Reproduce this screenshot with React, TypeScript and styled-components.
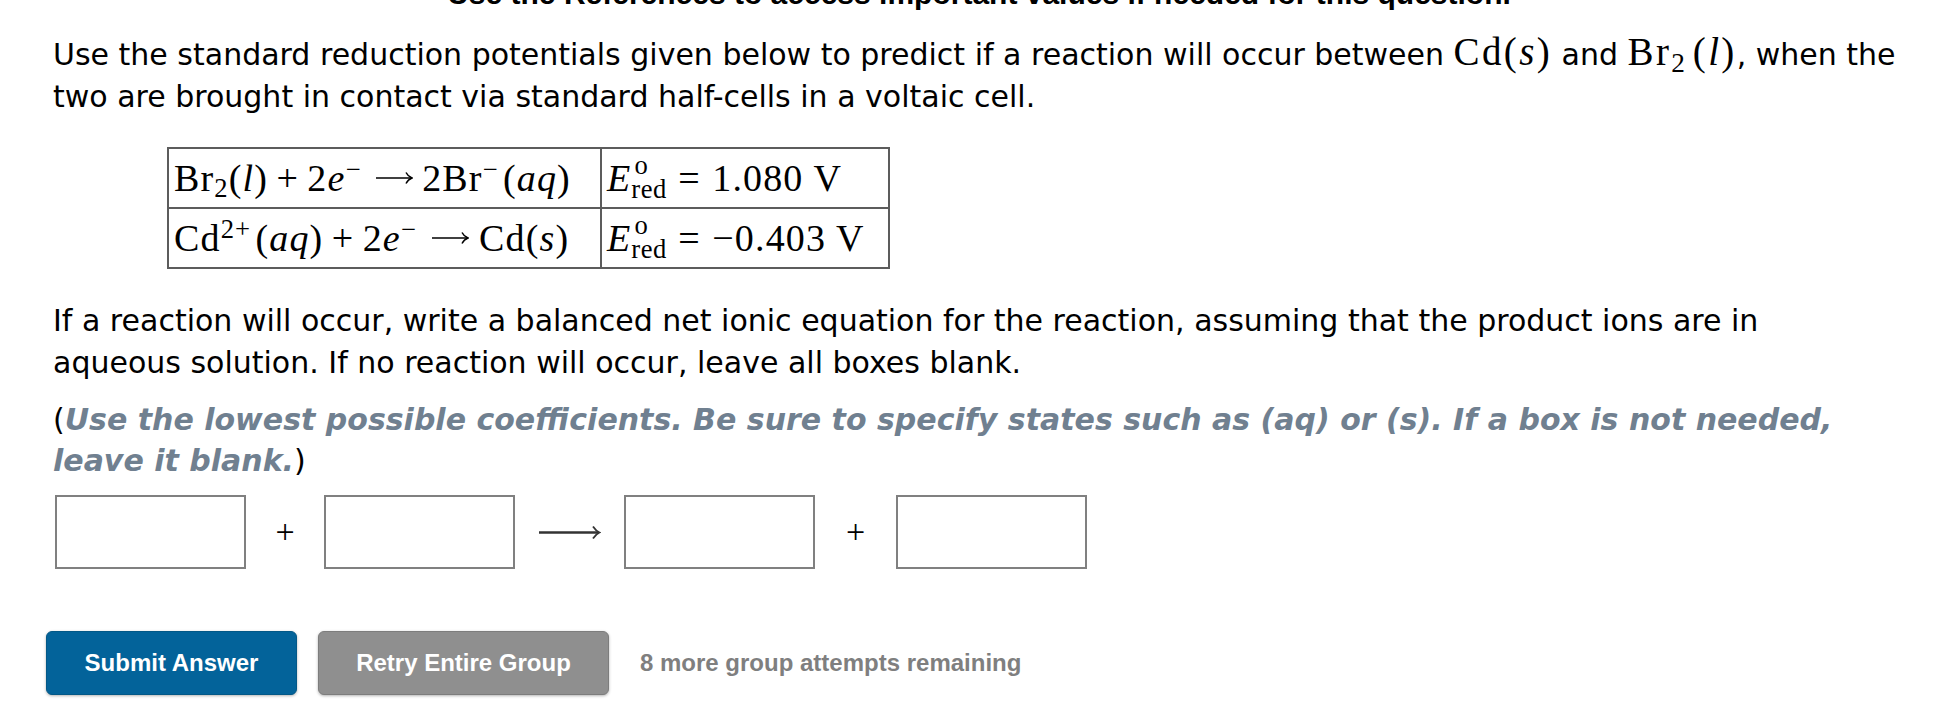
import React from 'react';
import styled, { createGlobalStyle } from 'styled-components';

const GlobalStyle = createGlobalStyle`
  html, body {
    margin: 0;
    padding: 0;
    background: #fff;
  }
  body {
    font-family: "DejaVu Sans", Verdana, sans-serif;
    color: #000;
  }
`;

const Page = styled.div`
  width: 1958px;
  height: 704px;
  overflow: hidden;
  background: #fff;
`;

const RefNotice = styled.div`
  margin-top: -22px;
  height: 32px;
  text-align: center;
  white-space: nowrap;
  font: bold 30px/32px "Liberation Sans", Arial, sans-serif;
`;

const Content = styled.div`
  padding-left: 53px;
`;

const Prose = styled.p<{ $top: number; $lineHeight?: number }>`
  margin: ${(p) => p.$top}px 0 0;
  width: 1895px;
  font-size: 30px;
  line-height: ${(p) => p.$lineHeight ?? 42}px;
`;

const Hint = styled.em`
  font-style: italic;
  font-weight: bold;
  color: #708090;
`;

/* math bits, KaTeX-ish */
const Math = styled.span`
  font-family: "Liberation Serif", "DejaVu Serif", serif;
  font-size: 39px;
  line-height: 1;
  letter-spacing: 0.06em;
  white-space: nowrap;
`;

const Var = styled.i`
  font-style: italic;
`;

const Sub = styled.sub`
  font-size: 0.7em;
  vertical-align: -0.24em;
  line-height: 0;
`;

const Sup = styled.sup`
  font-size: 0.7em;
  vertical-align: 0.5em;
  line-height: 0;
`;

const Bin = styled.span`
  margin: 0 0.22em;
`;

const Rel = styled.span<{ $space?: number }>`
  margin: 0 ${(p) => p.$space ?? 0.3}em;
`;

const Scripts = styled.span`
  display: inline-flex;
  flex-direction: column;
  font-size: 0.7em;
  line-height: 0.9;
  vertical-align: 17px;
  letter-spacing: 0.02em;

  & > span:first-child {
    margin-left: 0.12em;
  }
`;

const PotentialTable = styled.table`
  margin: 29px 0 0 114px;
  border-collapse: collapse;
  table-layout: fixed;
  width: 721px;
  font-family: "Liberation Serif", "DejaVu Serif", serif;
  font-size: 38px;
  letter-spacing: 0.03em;
`;

const Row = styled.tr`
  height: 60px;
`;

const Cell = styled.td<{ $width: number }>`
  width: ${(p) => p.$width}px;
  padding: 0 3px 0 5px;
  border: 2px solid #5c5c5c;
  white-space: nowrap;
  vertical-align: middle;
  line-height: 1;
  overflow: hidden;
`;

const ArrowGlyph = styled.svg`
  vertical-align: 0.12em;
`;

const EquationRow = styled.div`
  display: flex;
  align-items: center;
  margin: 14px 0 0 2px;
`;

const AnswerBox = styled.input`
  width: 191px;
  height: 74px;
  box-sizing: border-box;
  margin: 0;
  border: 2px solid #808080;
  border-radius: 0;
  background: #fff;
  outline: none;
`;

const Operator = styled.div<{ $width: number }>`
  width: ${(p) => p.$width}px;
  display: flex;
  justify-content: center;
  align-items: center;
  font-family: "Liberation Serif", "DejaVu Serif", serif;
  font-size: 34px;
  line-height: 1;
`;

const ActionRow = styled.div`
  display: flex;
  align-items: center;
  gap: 21px;
  margin: 62px 0 0 -7px;
`;

const ActionButton = styled.button<{ $variant: 'primary' | 'secondary'; $width: number }>`
  width: ${(p) => p.$width}px;
  height: 64px;
  border-radius: 6px;
  border: 1px solid ${(p) => (p.$variant === 'primary' ? '#035887' : '#7d7d7d')};
  background: ${(p) => (p.$variant === 'primary' ? '#03639a' : '#8f8f8f')};
  color: #fff;
  font: bold 24px "Liberation Sans", Arial, sans-serif;
  box-shadow: 0 1px 3px rgba(0, 0, 0, 0.3);
  cursor: pointer;
`;

const Attempts = styled.span`
  margin-left: 10px;
  color: #7f7f7f;
  font: bold 24px "Liberation Sans", Arial, sans-serif;
`;

const LongArrow = () => (
  <svg width="62" height="18" viewBox="0 0 62 18">
    <path d="M0 9.5H59" stroke="#333" strokeWidth="2.4" fill="none" />
    <path d="M54 3.5Q57 8 60.5 9.5Q57 11 54 15.5" stroke="#333" strokeWidth="1.8" fill="none" />
  </svg>
);

const RightArrow = () => (
  <ArrowGlyph width="38" height="16" viewBox="0 0 38 16">
    <path d="M1 8H36" stroke="#000" strokeWidth="1.6" fill="none" />
    <path d="M31 2.5Q33 6.5 37 8Q33 9.5 31 13.5" stroke="#000" strokeWidth="1.5" fill="none" />
  </ArrowGlyph>
);

const Ered = () => (
  <>
    <Var>E</Var>
    <Scripts>
      <span>o</span>
      <span>red</span>
    </Scripts>
  </>
);

export default function App() {
  return (
    <Page>
      <GlobalStyle />
      <RefNotice>Use the References to access important values if needed for this question.</RefNotice>
      <Content>
        <Prose $top={22}>
          Use the standard reduction potentials given below to predict if a reaction will occur between{' '}
          <Math>
            Cd(<Var>s</Var>)
          </Math>{' '}
          and{' '}
          <Math>
            Br<Sub>2</Sub>&#8202;(<Var>l</Var>)
          </Math>
          , when the
          <br />
          two are brought in contact via standard half-cells in a voltaic cell.
        </Prose>

        <PotentialTable>
          <tbody>
            <Row>
              <Cell $width={423}>
                Br<Sub>2</Sub>(<Var>l</Var>)<Bin>+</Bin>2<Var>e</Var>
                <Sup>−</Sup>&#8202;
                <Rel $space={0.24}>
                  <RightArrow />
                </Rel>
                2Br<Sup>−</Sup>&#8202;(<Var>aq</Var>)
              </Cell>
              <Cell $width={278}>
                <Ered />
                <Rel>=</Rel>1.080 V
              </Cell>
            </Row>
            <Row>
              <Cell $width={423}>
                Cd<Sup>2+</Sup>&#8202;(<Var>aq</Var>)<Bin>+</Bin>2<Var>e</Var>
                <Sup>−</Sup>&#8202;
                <Rel $space={0.26}>
                  <RightArrow />
                </Rel>
                Cd(<Var>s</Var>)
              </Cell>
              <Cell $width={278}>
                <Ered />
                <Rel>=</Rel>−0.403 V
              </Cell>
            </Row>
          </tbody>
        </PotentialTable>

        <Prose $top={31}>
          If a reaction will occur, write a balanced net ionic equation for the reaction, assuming that the product ions are in
          <br />
          aqueous solution. If no reaction will occur, leave all boxes blank.
        </Prose>

        <Prose $top={15} $lineHeight={41}>
          (
          <Hint>
            Use the lowest possible coefficients. Be sure to specify states such as (aq) or (s). If a box is not needed,
            <br />
            leave it blank.
          </Hint>
          )
        </Prose>

        <EquationRow>
          <AnswerBox aria-label="reactant 1" />
          <Operator $width={78}>+</Operator>
          <AnswerBox aria-label="reactant 2" />
          <Operator $width={109}>
            <LongArrow />
          </Operator>
          <AnswerBox aria-label="product 1" />
          <Operator $width={81}>+</Operator>
          <AnswerBox aria-label="product 2" />
        </EquationRow>

        <ActionRow>
          <ActionButton $variant="primary" $width={251}>
            Submit Answer
          </ActionButton>
          <ActionButton $variant="secondary" $width={291}>
            Retry Entire Group
          </ActionButton>
          <Attempts>8 more group attempts remaining</Attempts>
        </ActionRow>
      </Content>
    </Page>
  );
}
